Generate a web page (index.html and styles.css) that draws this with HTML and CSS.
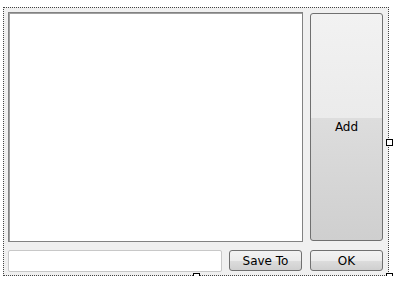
FILE: index.html
```html
<!DOCTYPE html>
<html lang="en">
<head>
  <meta charset="UTF-8">
  <title>Dialog</title>
  <link rel="stylesheet" href="styles.css">
</head>
<body>
  <div class="designer">
    <div class="form">
      <div class="listbox"></div>
      <button class="btn tall">Add</button>
      <div class="bottom">
        <input class="textbox" type="text">
        <button class="btn">Save To</button>
      </div>
      <button class="btn">OK</button>
    </div>
    <!-- resize handles -->
    <span class="handle h-right"></span>
    <span class="handle h-bottom"></span>
    <span class="handle h-corner"></span>
  </div>
</body>
</html>
```

FILE: styles.css
```css
body {
  margin: 0;
  background: #fff;
  font-family: Tahoma, "DejaVu Sans", sans-serif;
}
.designer {
  position: relative;
  margin: 7px 0 0 3px;
  width: 384px;
  height: 267px;
  border: 1px dotted #444;
  background: #f0f0f0;
}
.form {
  display: grid;
  grid-template-columns: 295px 73px;
  grid-template-rows: 230px 22px;
  column-gap: 7px;
  row-gap: 8px;
  padding: 4px 0 0 4px;
}
.listbox {
  background: #fff;
  border: 1px solid #828282;
  box-shadow: inset 1px 1px 0 #a0a0a0;
}
.bottom {
  display: flex;
  gap: 7px;
}
.textbox {
  width: 214px;
  height: 22px;
  box-sizing: border-box;
  margin: 0;
  border: 1px solid #c8c8c8;
  border-radius: 2px;
  background: #fff;
}
.btn {
  width: 73px;
  height: 21px;
  margin: 0;
  padding: 0;
  border: 1px solid #707070;
  border-radius: 3px;
  background: linear-gradient(#f2f2f2 0%, #ebebeb 50%, #dddddd 50%, #cfcfcf 100%);
  font-family: Tahoma, "DejaVu Sans", sans-serif;
  font-size: 12px;
  color: #000;
}
.tall {
  height: 228px;
  margin-top: 1px;
  background: linear-gradient(#f2f2f2 0%, #ebebeb 46%, #dddddd 46%, #cfcfcf 100%);
}
.handle {
  position: absolute;
  width: 5px;
  height: 5px;
  border: 1px solid #000;
  background: #fff;
}
.h-right {
  right: -5px;
  top: 131px;
}
.h-bottom {
  left: 189px;
  bottom: -5px;
}
.h-corner {
  right: -5px;
  bottom: -5px;
}
```
